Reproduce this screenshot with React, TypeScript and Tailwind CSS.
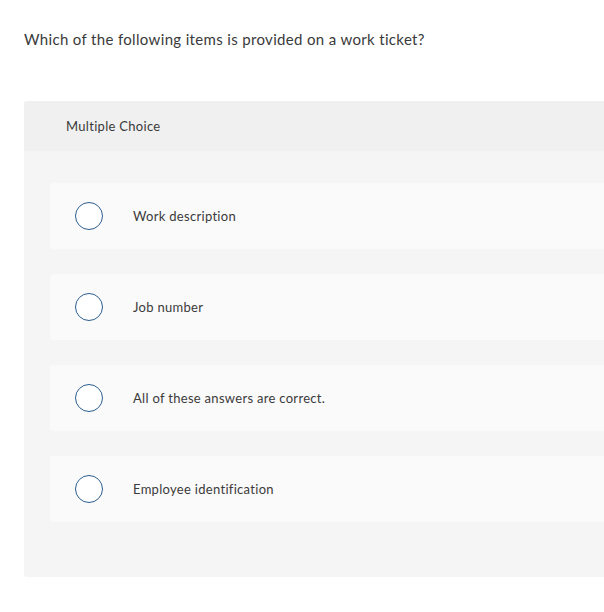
const options = [
  'Work description',
  'Job number',
  'All of these answers are correct.',
  'Employee identification',
];

function Option({ label }: { label: string }) {
  return (
    <div className="flex items-center h-[66px] rounded-[3px] bg-[#fafafa]">
      <span className="ml-[25px] w-[28px] h-[28px] rounded-full border-[1.5px] border-[#2b5d8f] bg-white shrink-0" />
      <span className="ml-[30px] pt-[2px] text-[13px] tracking-[0.3px] text-[#3a3a3a]">{label}</span>
    </div>
  );
}

export default function App() {
  return (
    <div
      className="w-[604px] h-[612px] overflow-hidden bg-white"
      style={{ fontFamily: 'Lato, "Open Sans", sans-serif' }}
    >
      <div className="pt-[29px] pl-6 text-[15px] leading-5 tracking-[0.34px] text-[#3a3a3a]">
        Which of the following items is provided on a work ticket?
      </div>
      <div className="mt-[52px] ml-6 w-[620px] rounded-[3px] bg-[#f5f5f5] pb-[55px]">
        <div className="h-[50px] flex items-center pl-[42px] pt-[2px] bg-[#f0f0f0] rounded-t-[3px] text-[13px] tracking-[0.3px] text-[#3a3a3a]">
          Multiple Choice
        </div>
        <div className="pt-[32px] pl-[26px] flex flex-col gap-[25px]">
          {options.map((o) => (
            <Option key={o} label={o} />
          ))}
        </div>
      </div>
    </div>
  );
}
